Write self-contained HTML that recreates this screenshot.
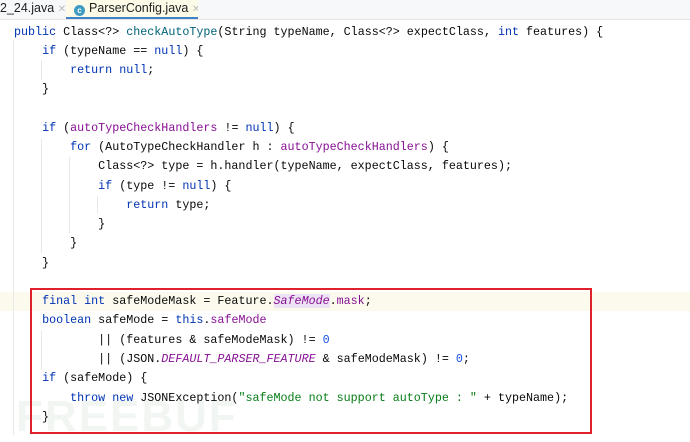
<!DOCTYPE html>
<html><head><style>
body{margin:0;width:690px;height:436px;background:#fff;overflow:hidden;position:relative;font-family:"Liberation Sans",sans-serif}
.tabs{position:absolute;left:0;top:0;width:690px;height:19px;background:#f7f8fa;border-bottom:1px solid #e4e4e4}
.tab{position:absolute;top:0;height:17px;font-size:12.5px;line-height:17px;color:#222;white-space:nowrap;overflow:hidden}
.act{left:66px;width:132px;background:#fdfbe8;border-bottom:2px solid #4083c9}
.x{color:#bbb;font-size:10px}
.ci{display:inline-block;width:11px;height:11px;border-radius:50%;background:#3e9bc2;color:#fff;font-size:8px;line-height:11px;text-align:center;vertical-align:-1px;margin:0 4px 0 8px;font-weight:bold}
.hl{position:absolute;left:0;top:292px;width:690px;height:19px;background:#fcfaed}
pre{position:absolute;left:14px;top:22.5px;margin:0;font-family:"Liberation Mono",monospace;font-size:11.7px;line-height:19.27px;color:#080808}
.k{color:#0033b3}.m{color:#00627a}.p{color:#871094}.i{color:#871094;font-style:italic}.s{color:#067d17}.n{color:#1750eb}
.sm{background:#ede3f5}
.g{position:absolute;width:1px;background:#e8e8e8}
.box{position:absolute;left:30px;top:288px;width:558px;height:142px;border:2px solid #e0202a}
.wm{position:absolute;left:16px;top:392px;font:bold 44px "Liberation Sans",sans-serif;color:rgba(200,220,205,.25);letter-spacing:2px}
</style></head><body>
<div class="tabs">
<div class="tab" style="left:0">2_24.java <span class="x">✕</span></div>
<div class="tab act"><span class="ci">c</span>ParserConfig.java <span class="x">✕</span></div>
</div>
<div class="hl"></div>
<div class="g" style="left:13px;top:40px;height:395px"></div>
<div class="g" style="left:41px;top:60px;height:20px"></div>
<div class="g" style="left:41px;top:138px;height:115px"></div>
<div class="g" style="left:69px;top:157px;height:76px"></div>
<div class="g" style="left:97px;top:196px;height:18px"></div>
<div class="g" style="left:41px;top:330px;height:40px"></div>
<div class="wm">FREEBUF</div>
<pre><span class="k">public</span> Class&lt;?&gt; <span class="m">checkAutoType</span>(String typeName, Class&lt;?&gt; expectClass, <span class="k">int</span> features) {
    <span class="k">if</span> (typeName == <span class="k">null</span>) {
        <span class="k">return null</span>;
    }

    <span class="k">if</span> (<span class="p">autoTypeCheckHandlers</span> != <span class="k">null</span>) {
        <span class="k">for</span> (AutoTypeCheckHandler h : <span class="p">autoTypeCheckHandlers</span>) {
            Class&lt;?&gt; type = h.handler(typeName, expectClass, features);
            <span class="k">if</span> (type != <span class="k">null</span>) {
                <span class="k">return</span> type;
            }
        }
    }

    <span class="k">final int</span> safeModeMask = Feature.<span class="i sm">SafeMode</span>.<span class="p">mask</span>;
    <span class="k">boolean</span> safeMode = <span class="k">this</span>.<span class="p">safeMode</span>
            || (features &amp; safeModeMask) != <span class="n">0</span>
            || (JSON.<span class="i">DEFAULT_PARSER_FEATURE</span> &amp; safeModeMask) != <span class="n">0</span>;
    <span class="k">if</span> (safeMode) {
        <span class="k">throw new</span> JSONException(<span class="s">"safeMode not support autoType : "</span> + typeName);
    }</pre>
<div class="box"></div>
</body></html>
